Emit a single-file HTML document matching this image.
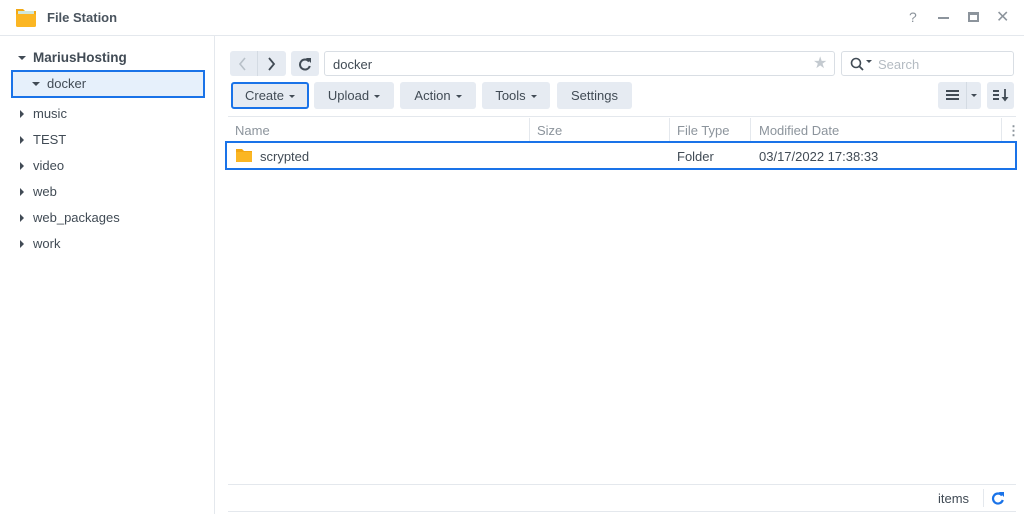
<!DOCTYPE html>
<html><head><style>
*{box-sizing:border-box;margin:0;padding:0}
body{width:1024px;height:514px;background:#fff;font-family:"Liberation Sans",sans-serif;font-size:13px;color:#414b55;position:relative;overflow:hidden}
.a{position:absolute}
.btn{position:absolute;background:#e6ebf2;border-radius:3px;height:27px;top:82px;line-height:27px;text-align:center;color:#414b55}
.car{display:inline-block;width:0;height:0;border-left:3px solid transparent;border-right:3px solid transparent;border-top:3px solid #414b55;vertical-align:middle;margin-left:5px}
.tri{display:inline-block;width:0;height:0;border-top:4px solid transparent;border-bottom:4px solid transparent;border-left:4px solid #414b55;margin-right:9px;vertical-align:0}
.trd{display:inline-block;width:0;height:0;border-left:4px solid transparent;border-right:4px solid transparent;border-top:4px solid #414b55;margin-right:7px;vertical-align:2px}
.tree{position:absolute;left:20px}
.hd{position:absolute;top:123px;color:#8c949c}
.vd{position:absolute;top:118px;width:1px;height:24px;background:#e4e8ed}
</style></head><body>
<svg class="a" style="left:15px;top:6px" width="22" height="22" viewBox="0 0 22 22"><path d="M1 3h7l2 2h11v15H1z" fill="#f2a915"/><rect x="3" y="5" width="16" height="6" fill="#cfe7dc"/><rect x="1" y="8" width="20" height="13" rx="1.5" fill="#fbb623"/></svg>
<div class="a" style="left:47px;top:10px;font-weight:bold;color:#4a545e;font-size:13px">File Station</div>
<div class="a" style="left:909px;top:9px;color:#8c949c;font-size:14px">?</div>
<div class="a" style="left:938px;top:17px;width:11px;height:2px;background:#8c949c"></div>
<div class="a" style="left:968px;top:12px;width:11px;height:10px;border:2px solid #8c949c;border-top-width:3px"></div>
<div class="a" style="left:996px;top:7px;color:#8c949c;font-size:16px">✕</div>
<div class="a" style="left:0;top:35px;width:1024px;height:1px;background:#e4e8ed"></div>
<div class="a" style="left:214px;top:36px;width:1px;height:478px;background:#e4e8ed"></div>
<div class="tree" style="top:50px;left:18px;font-weight:bold;font-size:13.5px"><span class="trd"></span>MariusHosting</div>
<div class="a" style="left:11px;top:70px;width:194px;height:28px;background:#e6f0fb;border:2px solid #1a73e8"></div>
<div class="tree" style="top:76px;left:32px"><span class="trd"></span>docker</div>
<div class="tree" style="top:106px"><span class="tri"></span>music</div>
<div class="tree" style="top:132px"><span class="tri"></span>TEST</div>
<div class="tree" style="top:158px"><span class="tri"></span>video</div>
<div class="tree" style="top:184px"><span class="tri"></span>web</div>
<div class="tree" style="top:210px"><span class="tri"></span>web_packages</div>
<div class="tree" style="top:236px"><span class="tri"></span>work</div>
<div class="btn" style="left:230px;top:51px;width:56px;height:25px"></div>
<div class="a" style="left:257px;top:51px;width:1px;height:25px;background:#d4dbe3"></div>
<svg class="a" style="left:238px;top:57px" width="10" height="14"><path d="M7 1L2 7l5 6" fill="none" stroke="#b8c0c8" stroke-width="1.6"/></svg>
<svg class="a" style="left:266px;top:57px" width="10" height="14"><path d="M3 1l5 6-5 6" fill="none" stroke="#414b55" stroke-width="1.8"/></svg>
<div class="btn" style="left:291px;top:51px;width:28px;height:25px"></div>
<svg class="a" style="left:298px;top:57px" width="14" height="14"><path d="M11 4.5A5 5 0 1 0 11.8 9" fill="none" stroke="#414b55" stroke-width="2"/><path d="M8 1h5v5z" fill="#414b55"/></svg>
<div class="a" style="left:324px;top:51px;width:511px;height:25px;border:1px solid #d9dee4;border-radius:3px"></div>
<div class="a" style="left:333px;top:57px">docker</div>
<div class="a" style="left:813px;top:53px;color:#c4cad0;font-size:16px">★</div>
<div class="a" style="left:841px;top:51px;width:173px;height:25px;border:1px solid #d9dee4;border-radius:3px"></div>
<svg class="a" style="left:850px;top:57px" width="14" height="14"><circle cx="6" cy="6" r="4.5" fill="none" stroke="#414b55" stroke-width="1.6"/><path d="M9.5 9.5l3.5 3.5" stroke="#414b55" stroke-width="1.8"/></svg>
<div class="a" style="left:866px;top:60px;width:0;height:0;border-left:3px solid transparent;border-right:3px solid transparent;border-top:3px solid #414b55"></div>
<div class="a" style="left:878px;top:57px;color:#b4bbc2">Search</div>
<div class="btn" style="left:231px;width:78px;border:2px solid #1a73e8;line-height:23px">Create<span class="car"></span></div>
<div class="btn" style="left:314px;width:80px">Upload<span class="car"></span></div>
<div class="btn" style="left:400px;width:76px">Action<span class="car"></span></div>
<div class="btn" style="left:482px;width:68px">Tools<span class="car"></span></div>
<div class="btn" style="left:557px;width:75px">Settings</div>
<div class="btn" style="left:938px;width:43px"></div>
<div class="a" style="left:966px;top:82px;width:1px;height:27px;background:#d4dbe3"></div>
<div class="a" style="left:946px;top:90px;width:13px;height:2px;background:#414b55;box-shadow:0 4px 0 #414b55,0 8px 0 #414b55"></div>
<div class="a" style="left:971px;top:94px;width:0;height:0;border-left:3px solid transparent;border-right:3px solid transparent;border-top:3px solid #414b55"></div>
<div class="btn" style="left:987px;width:27px"></div>
<div class="a" style="left:993px;top:90px;width:6px;height:2px;background:#414b55;box-shadow:0 4px 0 #414b55,0 8px 0 #414b55"></div>
<svg class="a" style="left:1001px;top:89px" width="8" height="13"><path d="M4 0v10" stroke="#414b55" stroke-width="1.8"/><path d="M0.5 8h7L4 12.5z" fill="#414b55"/></svg>
<div class="a" style="left:228px;top:116px;width:788px;height:1px;background:#e4e8ed"></div>
<div class="hd" style="left:235px">Name</div>
<div class="vd" style="left:529px"></div><div class="hd" style="left:537px">Size</div>
<div class="vd" style="left:669px"></div><div class="hd" style="left:677px">File Type</div>
<div class="vd" style="left:750px"></div><div class="hd" style="left:759px">Modified Date</div>
<div class="vd" style="left:1001px"></div><div class="hd" style="left:1007px;font-weight:bold">⋮</div>
<div class="a" style="left:225px;top:141px;width:792px;height:29px;border:2px solid #1a73e8"></div>
<svg class="a" style="left:236px;top:148px" width="16" height="14"><path d="M0 1h6l2 2h8v11H0z" fill="#f3a712"/><rect x="0" y="4" width="16" height="10" rx="1" fill="#fbb623"/></svg>
<div class="a" style="left:260px;top:149px">scrypted</div>
<div class="a" style="left:677px;top:149px">Folder</div>
<div class="a" style="left:759px;top:149px">03/17/2022 17:38:33</div>
<div class="a" style="left:228px;top:484px;width:788px;height:1px;background:#e4e8ed"></div>
<div class="a" style="left:938px;top:491px">items</div>
<div class="a" style="left:983px;top:489px;width:1px;height:18px;background:#e4e8ed"></div>
<svg class="a" style="left:991px;top:491px" width="14" height="14"><path d="M11 4.5A5 5 0 1 0 11.8 9" fill="none" stroke="#1a73e8" stroke-width="2.2"/><path d="M8 1h5v5z" fill="#1a73e8"/></svg>
<div class="a" style="left:228px;top:511px;width:788px;height:1px;background:#e4e8ed"></div>
</body></html>
